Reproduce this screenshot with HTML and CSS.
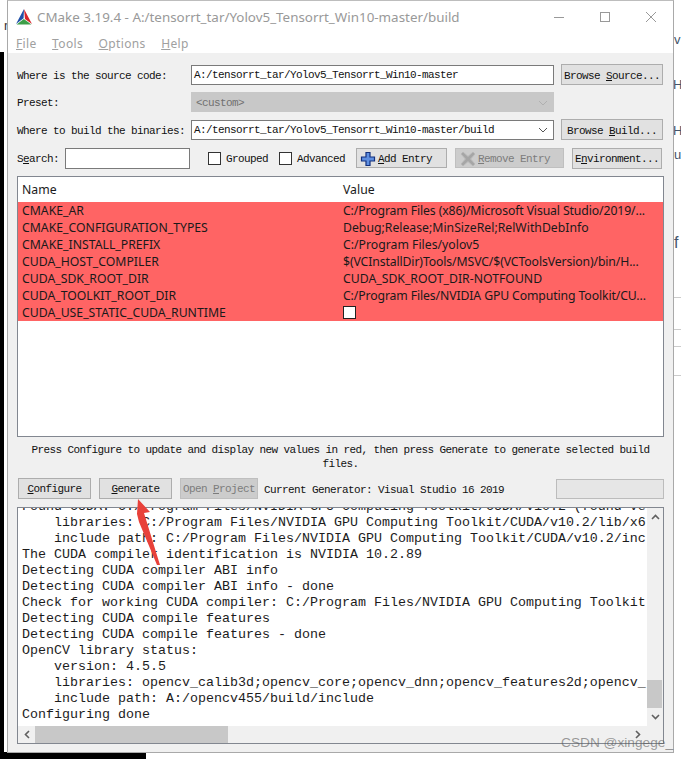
FILE: index.html
```html
<!DOCTYPE html>
<html lang="en">
<head>
<meta charset="utf-8">
<title>CMake</title>
<link rel="stylesheet" href="styles.css">
</head>
<body>
<div class="desktop">
  <div class="edge-left"></div>
  <div class="edge-bottom"></div>
  <span class="bg-glyph g1">n</span>
  <span class="bg-glyph g2">v</span>
  <span class="bg-glyph g3">H</span>
  <span class="bg-glyph g4">H</span>
  <span class="bg-glyph g5">u</span>
  <span class="bg-glyph g6">f</span>
  <div class="bg-line l1"></div>
  <div class="bg-line l2"></div>
  <div class="bg-line l3"></div>
  <div class="bg-line l4"></div>

  <div class="window">
    <header class="titlebar">
      <svg class="logo" viewBox="0 0 16 16" width="16" height="16">
        <polygon points="8,0 7.6,9.2 0,15" fill="#1f4fa8"/>
        <polygon points="8,0 16,15 9,10" fill="#d8242c"/>
        <polygon points="0.6,15.6 7.8,10 15.4,15.6" fill="#3d9e48"/>
      </svg>
      <span class="title">CMake 3.19.4 - A:/tensorrt_tar/Yolov5_Tensorrt_Win10-master/build</span>
      <div class="winctl">
        <svg width="12" height="12" viewBox="0 0 12 12"><path d="M1 6.5H11" stroke="#999" fill="none"/></svg>
        <svg width="12" height="12" viewBox="0 0 12 12"><rect x="1.5" y="1.5" width="9" height="9" stroke="#999" fill="none"/></svg>
        <svg width="12" height="12" viewBox="0 0 12 12"><path d="M1 1L11 11M11 1L1 11" stroke="#999" fill="none"/></svg>
      </div>
    </header>
    <nav class="menubar">
      <span><u>F</u>ile</span>
      <span><u>T</u>ools</span>
      <span><u>O</u>ptions</span>
      <span><u>H</u>elp</span>
    </nav>
    <main class="content">
      <div class="row row-source">
        <label class="lbl wide">Where is the source code:</label>
        <div class="field path">A:/tensorrt_tar/Yolov5_Tensorrt_Win10-master</div>
        <button class="btn browse"><span>Browse <u>S</u>ource...</span></button>
      </div>
      <div class="row row-preset">
        <label class="lbl wide">Preset:</label>
        <div class="field path disabled"><span>&lt;custom&gt;</span>
          <svg class="caret" width="10" height="6" viewBox="0 0 10 6"><path d="M1 1L5 5L9 1" stroke="#b0b0b0" fill="none"/></svg>
        </div>
      </div>
      <div class="row row-build">
        <label class="lbl wide">Where to build the binaries:</label>
        <div class="field path combo"><span>A:/tensorrt_tar/Yolov5_Tensorrt_Win10-master/build</span>
          <svg class="caret" width="10" height="6" viewBox="0 0 10 6"><path d="M1 1L5 5L9 1" stroke="#555" fill="none"/></svg>
        </div>
        <button class="btn browse"><span>Browse <u>B</u>uild...</span></button>
      </div>
      <div class="row row-search">
        <label class="lbl search-lbl">S<u>e</u>arch:</label>
        <div class="field search"></div>
        <span class="check first"><i class="box"></i>Grouped</span>
        <span class="check second"><i class="box"></i>Advanced</span>
        <button class="btn add">
          <svg width="16" height="16" viewBox="0 0 16 16"><path d="M6 1.5H10V6H14.5V10H10V14.5H6V10H1.5V6H6Z" fill="#5f8fe0" stroke="#12307f" stroke-width="1.2"/></svg>
          <span><u>A</u>dd Entry</span>
        </button>
        <button class="btn remove" disabled>
          <svg width="16" height="16" viewBox="0 0 16 16"><path d="M3 1L8 5.5L13 1L15 3L10.5 8L15 13L13 15L8 10.5L3 15L1 13L5.5 8L1 3Z" fill="#a6a6a6" stroke="#b8b8b8"/></svg>
          <span><u>R</u>emove Entry</span>
        </button>
        <button class="btn env"><span>E<u>n</u>vironment...</span></button>
      </div>

      <section class="table">
        <div class="thead"><div class="c1">Name</div><div class="c2">Value</div></div>
        <div class="tr"><div class="c1">CMAKE_AR</div><div class="c2 tight">C:/Program Files (x86)/Microsoft Visual Studio/2019/...</div></div>
        <div class="tr"><div class="c1">CMAKE_CONFIGURATION_TYPES</div><div class="c2">Debug;Release;MinSizeRel;RelWithDebInfo</div></div>
        <div class="tr"><div class="c1">CMAKE_INSTALL_PREFIX</div><div class="c2">C:/Program Files/yolov5</div></div>
        <div class="tr"><div class="c1">CUDA_HOST_COMPILER</div><div class="c2 tight">$(VCInstallDir)Tools/MSVC/$(VCToolsVersion)/bin/H...</div></div>
        <div class="tr"><div class="c1">CUDA_SDK_ROOT_DIR</div><div class="c2">CUDA_SDK_ROOT_DIR-NOTFOUND</div></div>
        <div class="tr"><div class="c1">CUDA_TOOLKIT_ROOT_DIR</div><div class="c2 tight">C:/Program Files/NVIDIA GPU Computing Toolkit/CU...</div></div>
        <div class="tr"><div class="c1">CUDA_USE_STATIC_CUDA_RUNTIME</div><div class="c2"><i class="cellbox"></i></div></div>
      </section>

      <p class="note">Press Configure to update and display new values in red, then press Generate to generate selected build files.</p>

      <div class="row row-actions">
        <button class="btn act"><span><u>C</u>onfigure</span></button>
        <button class="btn act"><span><u>G</u>enerate</span></button>
        <button class="btn act open" disabled><span>Open <u>P</u>roject</span></button>
        <span class="generator">Current Generator: Visual Studio 16 2019</span>
        <div class="progress"></div>
      </div>

      <section class="log">
<pre class="log-text">Found CUDA: C:/Program Files/NVIDIA GPU Computing Toolkit/CUDA/v10.2 (found ve
    libraries: C:/Program Files/NVIDIA GPU Computing Toolkit/CUDA/v10.2/lib/x6
    include path: C:/Program Files/NVIDIA GPU Computing Toolkit/CUDA/v10.2/inc
The CUDA compiler identification is NVIDIA 10.2.89
Detecting CUDA compiler ABI info
Detecting CUDA compiler ABI info - done
Check for working CUDA compiler: C:/Program Files/NVIDIA GPU Computing Toolkit
Detecting CUDA compile features
Detecting CUDA compile features - done
OpenCV library status:
    version: 4.5.5
    libraries: opencv_calib3d;opencv_core;opencv_dnn;opencv_features2d;opencv_
    include path: A:/opencv455/build/include
Configuring done</pre>
        <div class="vbar">
          <svg class="sb-arrow" width="9" height="6" viewBox="0 0 9 6"><path d="M1 5L4.5 1.5L8 5" stroke="#606060" stroke-width="1.6" fill="none"/></svg>
          <div class="vthumb"></div>
          <svg class="sb-arrow down" width="9" height="6" viewBox="0 0 9 6"><path d="M1 1L4.5 4.5L8 1" stroke="#606060" stroke-width="1.6" fill="none"/></svg>
        </div>
        <div class="hbar">
          <svg class="sb-arrow" width="6" height="9" viewBox="0 0 6 9"><path d="M5 1L1.5 4.5L5 8" stroke="#606060" stroke-width="1.6" fill="none"/></svg>
          <div class="hthumb"></div>
          <svg class="sb-arrow right" width="6" height="9" viewBox="0 0 6 9"><path d="M1 1L4.5 4.5L1 8" stroke="#606060" stroke-width="1.6" fill="none"/></svg>
        </div>
      </section>
    </main>
  </div>

  <svg class="arrow" width="40" height="80" viewBox="0 0 40 80">
    <polygon points="9,2 21,15 15,16 31,68 28,68 10,25 8,17" fill="#e8413a"/>
  </svg>
  <span class="watermark">CSDN @xingege_</span>
</div>
</body>
</html>
```
FILE: styles.css
```css
* { box-sizing: border-box; }
html, body { margin: 0; padding: 0; background: #fff; }
.desktop { position: relative; width: 681px; height: 760px; overflow: hidden; background: #fff; }

.edge-left { position: absolute; left: 0; top: 52px; width: 4px; height: 700px; background: #000; }
.edge-bottom { position: absolute; left: 0; top: 752px; width: 146px; height: 7px; background: #000; }
.bg-glyph { position: absolute; font-family: "Liberation Sans", sans-serif; font-size: 13px; line-height: 14px; color: #44546a; }
.g1 { left: 4px; top: 19px; color: #333; }
.g2 { left: 674px; top: 33px; }
.g3 { left: 673px; top: 78px; }
.g4 { left: 673px; top: 124px; }
.g5 { left: 674px; top: 148px; }
.g6 { left: 674px; top: 233px; font-size: 16px; line-height: 20px; }
.bg-line { position: absolute; left: 674px; width: 7px; height: 1px; background: #ccc; }
.l1 { top: 297px; }
.l2 { top: 329px; }
.l3 { top: 346px; }
.l4 { top: 375px; }

.window {
  position: absolute; left: 7px; top: 0; width: 667px; height: 753px;
  background: #f0f0f0; border: 1px solid #a9a9a9; border-top-color: #bdbdbd;
  display: flex; flex-direction: column;
}
.titlebar { height: 31px; background: #fff; display: flex; align-items: center; padding: 0 0 0 8px; flex: none; }
.logo { flex: none; margin-top: 1px; }
.title { margin-left: 5px; font: 13.4px/16px "Noto Sans", sans-serif; color: #999; white-space: nowrap; }
.winctl { margin-left: auto; display: flex; gap: 34px; padding-right: 16px; }
.menubar { height: 21px; background: #fff; display: flex; gap: 15.5px; padding: 2px 0 0 8px; align-items: center; font: 12px/16px "Noto Sans", sans-serif; color: #a0a0a0; flex: none; letter-spacing: .35px; }

.content { flex: 1; padding: 11px 9px 0 9px; font: 11px/14px "Liberation Mono", monospace; letter-spacing: -.6px; color: #111; }
.row { display: flex; align-items: center; }
.row-source, .row-build { height: 21px; }
.row-preset { height: 20px; margin: 7px 0 7px; }
.row-search { height: 21px; margin-top: 8px; }
.lbl.wide { width: 174px; flex: none; padding-top: 2px; }
.field { background: #fff; border: 1px solid #7a7a7a; height: 20px; display: flex; align-items: center; padding: 1px 2px 0; white-space: nowrap; }
.path { width: 363px; flex: none; }
.disabled { background: #c8c8c8; border-color: #c8c8c8; color: #707070; padding-left: 4px; }
.caret { margin-left: auto; margin-right: 3px; }
.btn { font: inherit; letter-spacing: inherit; color: #111; background: #e1e1e1; border: 1px solid #adadad; height: 21px; padding: 1px 0 0; border-radius: 0; white-space: nowrap; display: flex; align-items: center; justify-content: center; }
.browse { width: 102px; margin-left: 7px; padding-top: 2px; }
.search-lbl { width: 48px; flex: none; }
.search { width: 125px; height: 21px; }
.check { display: flex; align-items: center; gap: 5px; white-space: nowrap; }
.check.first { margin-left: 18px; }
.check.second { margin-left: 11px; }
.box { width: 13px; height: 13px; border: 1px solid #333; background: #fff; display: block; }
.add { width: 91px; margin-left: 11px; gap: 2px; height: 20px; margin-top: -1px; justify-content: flex-start; padding-left: 3px; }
.remove { width: 109px; margin-left: 8px; gap: 2px; background: #ccc; border-color: #bfbfbf; color: #7c7c7c; height: 20px; margin-top: -1px; justify-content: flex-start; padding-left: 4px; }
.env { width: 90px; margin-left: 8px; }

.table { margin-top: 7px; height: 261px; width: 647px; background: #fff; border: 1px solid #828790; font: 12.25px/17px "Noto Sans", sans-serif; letter-spacing: 0; color: #1a1a1a; }
.thead, .tr { display: grid; grid-template-columns: 322px 1fr; white-space: nowrap; }
.thead { height: 25px; align-items: center; }
.tr { height: 17px; background: #ff6464; }
.c1 { padding-left: 4px; overflow: hidden; }
.c2 { padding-left: 3px; overflow: hidden; }
.tight { letter-spacing: -.12px; }
.cellbox { display: block; width: 13px; height: 13px; background: #fff; border: 1px solid #222; margin: 2px 0 0 0; }

.note { margin: 6px 0 0; height: 27px; text-align: center; padding: 0 10px; }
.row-actions { height: 21px; margin-top: 8px; }
.act { width: 73px; margin-left: 1px; margin-right: 8px; }
.act + .act { margin-left: 0; }
.open { width: 78px; background: #ccc; border-color: #bfbfbf; color: #7c7c7c; margin-right: 6px; }
.generator { white-space: nowrap; padding-top: 2px; }
.progress { margin-left: auto; width: 108px; height: 20px; background: #e6e6e6; border: 1px solid #bcbcbc; }

.log {
  margin-top: 8px; width: 647px; height: 237px; background: #fff; border: 1px solid #828790;
  display: grid; grid-template-columns: 1fr 16px; grid-template-rows: 218px 17px; overflow: hidden;
}
.log-text { margin: -9px 0 0; padding: 0 0 0 4px; height: 227px; overflow: hidden; font: 13.33px/16px "Liberation Mono", monospace; letter-spacing: 0; color: #1c1c1c; white-space: pre; }
.vbar { grid-row: 1; grid-column: 2; background: #f0f0f0; display: flex; flex-direction: column; align-items: center; height: 218px; }
.vthumb { width: 15px; height: 28px; background: #c8c8c8; margin: 160px 1px 0 0; }
.sb-arrow { flex: none; }
.vbar .sb-arrow { margin-top: 6px; }
.hbar { grid-row: 2; grid-column: 1 / 3; background: #f0f0f0; display: flex; align-items: center; padding: 0 22px 0 6px; }
.hthumb { width: 193px; height: 17px; background: #c8c8c8; margin-left: 5px; }
.hbar .right { margin-left: auto; }

.arrow { position: absolute; left: 129px; top: 497px; }
.watermark { position: absolute; left: 561px; top: 735px; font: 13.7px/16px "Liberation Sans", sans-serif; color: rgba(90,90,90,.6); white-space: nowrap; }
```
